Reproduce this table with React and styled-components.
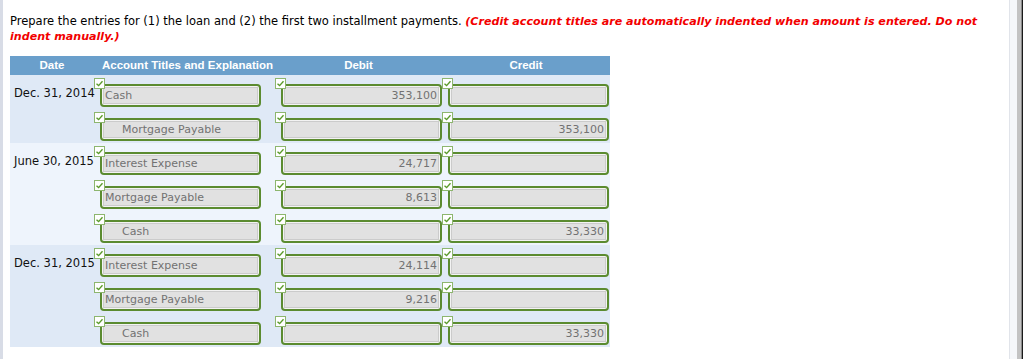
import React from 'react';
import styled, { createGlobalStyle } from 'styled-components';

const GlobalStyle = createGlobalStyle`
  html, body {
    margin: 0;
    padding: 0;
    background: #ffffff;
  }
  body {
    font-family: "DejaVu Sans", Verdana, sans-serif;
    font-size: 11.5px;
    color: #000;
  }
`;

const Frame = styled.div`
  display: flex;
  height: 359px;
  overflow: hidden;
`;

const LeftEdge = styled.div`
  width: 3px;
  flex-shrink: 0;
  background: #d8dce6;
`;

const Main = styled.div`
  flex: 1;
  padding: 14px 0 0 7px;
`;

const RightChrome = styled.div`
  width: 15px;
  flex-shrink: 0;
  background: linear-gradient(
    to right,
    #e1e4ea 0 1px,
    #f5f7fa 1px 8px,
    #c3c3c3 8px 12px,
    #8a8a8a 12px 13px,
    #1a1a1a 13px 14px,
    #ffffff 14px
  );
`;

const Instructions = styled.p`
  margin: 0;
  width: 985px;
  line-height: 14px;
`;

const Warning = styled.span`
  color: #f20000;
  font-weight: bold;
  font-style: italic;
  font-size: 11.1px;
`;

const Table = styled.div`
  margin-top: 12px;
  width: 600px;
`;

const Row = styled.div`
  display: grid;
  grid-template-columns: 84px 181px 167px 168px;
`;

const HeaderRow = styled(Row)`
  height: 19px;
  background: #6a9fcb;
  align-items: center;
`;

const HeadCell = styled.div`
  color: #ffffff;
  font-family: "Liberation Sans", Arial, sans-serif;
  font-weight: bold;
  font-size: 11.5px;
  line-height: 13px;
  white-space: nowrap;
  text-align: center;
  padding-left: ${(p) => p.shift || 0}px;
`;

const Group = styled.div`
  background: ${(p) => (p.light ? '#eef4fc' : '#dfe9f6')};
`;

const EntryRow = styled(Row)`
  height: 34px;
`;

const DateCell = styled.div`
  padding: 12px 0 0 4px;
  line-height: 13px;
  white-space: nowrap;
  color: #111;
`;

const Cell = styled.div`
  position: relative;
  padding: 9px 0 0 6px;
`;

const Check = styled.span`
  position: absolute;
  left: 0;
  top: 3px;
  width: 11px;
  height: 11px;
  box-sizing: border-box;
  border: 1px solid #8db66e;
  background: #ffffff;
  display: flex;
  align-items: center;
  justify-content: center;
  z-index: 1;
`;

const Field = styled.div`
  width: 161px;
  height: 23px;
  box-sizing: border-box;
  border: 2px solid #5b8b30;
  border-radius: 4px;
  padding: 1px;
  background: #f3f3f3;
`;

const FieldInner = styled.div`
  height: 100%;
  box-sizing: border-box;
  background: #e1e1e1;
  border: 1px solid #cbcbcb;
  color: #727272;
  font-size: 11px;
  line-height: 15px;
  white-space: nowrap;
  overflow: hidden;
  text-align: ${(p) => (p.amount ? 'right' : 'left')};
  padding: ${(p) => (p.amount ? '0 1px 0 0' : p.indent ? '0 0 0 18px' : '0 0 0 1px')};
`;

const Tick = () => (
  <svg width="9" height="9" viewBox="0 0 9 9">
    <path d="M1.5 4.8 L3.6 6.6 L7.5 2.2" fill="none" stroke="#5a9a2a" strokeWidth="1.4" />
  </svg>
);

const Input = ({ value, amount, indent }) => (
  <Cell>
    <Check>
      <Tick />
    </Check>
    <Field>
      <FieldInner amount={amount} indent={indent}>
        {value}
      </FieldInner>
    </Field>
  </Cell>
);

const groups = [
  {
    light: false,
    rows: [
      { date: 'Dec. 31, 2014', account: 'Cash', debit: '353,100' },
      { account: 'Mortgage Payable', indent: true, credit: '353,100' },
    ],
  },
  {
    light: true,
    rows: [
      { date: 'June 30, 2015', account: 'Interest Expense', debit: '24,717' },
      { account: 'Mortgage Payable', debit: '8,613' },
      { account: 'Cash', indent: true, credit: '33,330' },
    ],
  },
  {
    light: false,
    rows: [
      { date: 'Dec. 31, 2015', account: 'Interest Expense', debit: '24,114' },
      { account: 'Mortgage Payable', debit: '9,216' },
      { account: 'Cash', indent: true, credit: '33,330' },
    ],
  },
];

const App = () => {
  return (
    <>
      <GlobalStyle />
      <Frame>
        <LeftEdge />
        <Main>
          <Instructions>
            Prepare the entries for (1) the loan and (2) the first two installment payments.{' '}
            <Warning>
              (Credit account titles are automatically indented when amount is entered. Do not
              indent manually.)
            </Warning>
          </Instructions>
          <Table>
            <HeaderRow>
              <HeadCell>Date</HeadCell>
              <HeadCell shift={6}>Account Titles and Explanation</HeadCell>
              <HeadCell>Debit</HeadCell>
              <HeadCell>Credit</HeadCell>
            </HeaderRow>
            {groups.map((group, g) => (
              <Group key={g} light={group.light}>
                {group.rows.map((row, i) => (
                  <EntryRow key={i}>
                    <DateCell>{row.date}</DateCell>
                    <Input value={row.account} indent={row.indent} />
                    <Input value={row.debit} amount />
                    <Input value={row.credit} amount />
                  </EntryRow>
                ))}
              </Group>
            ))}
          </Table>
        </Main>
        <RightChrome />
      </Frame>
    </>
  );
};

export default App;
